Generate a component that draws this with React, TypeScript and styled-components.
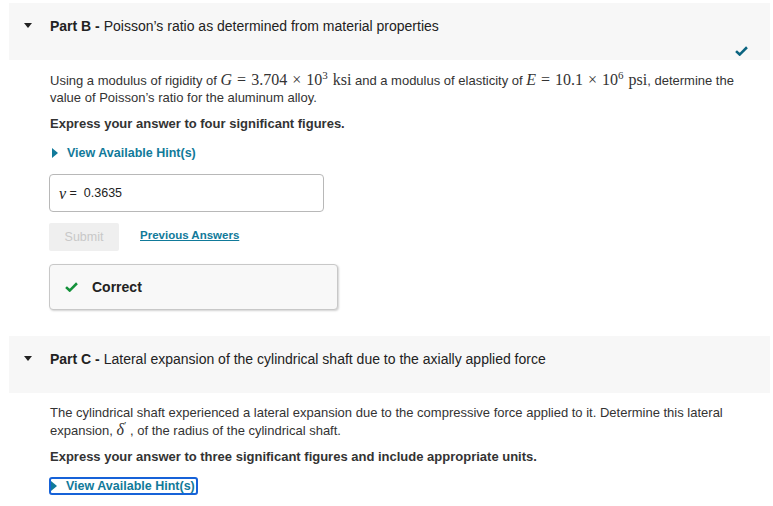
import styled, { createGlobalStyle } from 'styled-components';

const GlobalStyle = createGlobalStyle`
  body {
    margin: 0;
    background: #ffffff;
    font-family: "Liberation Sans", Arial, sans-serif;
    color: #333333;
  }
`;

const Page = styled.div`
  padding: 3px 3px 0 9px;
`;

const PartHeader = styled.div`
  position: relative;
  height: 57px;
  background: #f7f7f7;
  display: flex;
  align-items: flex-start;
  padding: 15px 0 0 15px;
  box-sizing: border-box;
  font-size: 14px;
  color: #222222;
`;

const Caret = styled.span`
  width: 0;
  height: 0;
  border-left: 4.5px solid transparent;
  border-right: 4.5px solid transparent;
  border-top: 5px solid #222222;
  margin: 5px 18px 0 0;
`;

const PartLabel = styled.span`
  font-weight: bold;
`;

const DoneMark = styled.div`
  position: absolute;
  right: 22px;
  bottom: 1px;
`;

const Body = styled.div<{ $bottom: number }>`
  padding: 11px 24px 0 41px;
  margin-bottom: ${(p) => p.$bottom}px;
  font-size: 13px;
  line-height: 17px;
  color: #333333;
`;

const Para = styled.p`
  margin: 0;
`;

const Instruction = styled.p`
  margin: 9px 0 0;
  font-weight: bold;
  color: #333333;
`;

const HintLink = styled.div<{ $focused?: boolean }>`
  display: inline-flex;
  align-items: center;
  margin-top: 12px;
  margin-left: ${(p) => (p.$focused ? '-1px' : '0')};
  padding: 0 1px 0 0;
  font-weight: bold;
  color: #117a9a;
  font-size: 12.5px;
  line-height: 14px;
  border: ${(p) => (p.$focused ? '2px solid #1662d8' : '2px solid transparent')};
  border-radius: 3px;
  box-sizing: border-box;
`;

const HintCaret = styled.span`
  width: 0;
  height: 0;
  border-top: 5px solid transparent;
  border-bottom: 5px solid transparent;
  border-left: 6px solid #117a9a;
  margin-right: 9px;
`;

const AnswerBox = styled.div`
  width: 275px;
  height: 38px;
  margin-top: 12px;
  margin-left: -1px;
  border: 1px solid #b8b8b8;
  border-radius: 4px;
  box-sizing: border-box;
  display: flex;
  align-items: center;
  padding-left: 9px;
  font-size: 12.5px;
  color: #222222;
`;

const MathVar = styled.span`
  font-family: "Liberation Serif", "Times New Roman", serif;
  font-style: italic;
  font-size: 16px;
`;

const MathUp = styled.span`
  font-family: "Liberation Serif", "Times New Roman", serif;
  font-size: 16px;
`;

const MathOp = styled(MathUp)`
  display: inline-block;
  margin: 0 5px;
`;

const MathUnit = styled(MathUp)`
  display: inline-block;
  margin-left: 5px;
`;

const Sup = styled.sup`
  font-family: "Liberation Serif", "Times New Roman", serif;
  font-size: 11px;
  line-height: 0;
  vertical-align: 6px;
`;

const ActionRow = styled.div`
  display: flex;
  align-items: center;
  gap: 21px;
  margin-top: 11px;
  margin-left: -1px;
`;

const SubmitButton = styled.button`
  width: 70px;
  height: 28px;
  border: none;
  border-radius: 2px;
  background: #efefef;
  color: #c8c8c8;
  font-family: "Liberation Sans", Arial, sans-serif;
  font-size: 12.5px;
  padding: 0;
`;

const PrevLink = styled.span`
  color: #117a9a;
  font-weight: bold;
  font-size: 11.5px;
  text-decoration: underline;
  margin-top: -3px;
`;

const FeedbackBox = styled.div`
  width: 289px;
  height: 46px;
  margin-top: 13px;
  margin-left: -1px;
  border: 1px solid #c8c8c8;
  border-radius: 4px;
  background: #f8f8f8;
  box-shadow: 1px 1px 2px rgba(0, 0, 0, 0.18);
  box-sizing: border-box;
  display: flex;
  align-items: center;
  padding-left: 15px;
  gap: 14px;
  font-weight: bold;
  font-size: 14px;
  color: #222222;
`;

const Check = ({ color, w, h }: { color: string; w: number; h: number }) => (
  <svg width={w} height={h} viewBox="0 0 14 11">
    <path d="M1 5.6 L5 9.4 L13 1.4" fill="none" stroke={color} strokeWidth="2.8" strokeLinejoin="miter" />
  </svg>
);

const App = () => (
  <Page>
    <GlobalStyle />
    <PartHeader>
      <Caret />
      <span>
        <PartLabel>Part B - </PartLabel>Poisson’s ratio as determined from material properties
      </span>
      <DoneMark>
        <Check color="#0b6480" w={13} h={10} />
      </DoneMark>
    </PartHeader>
    <Body $bottom={26}>
      <Para>
        Using a modulus of rigidity of <MathVar>G</MathVar>
        <MathOp>=</MathOp>
        <MathUp>3.704</MathUp>
        <MathOp>×</MathOp>
        <MathUp>10</MathUp>
        <Sup>3</Sup>
        <MathUnit>ksi</MathUnit> and a modulus of elasticity of <MathVar>E</MathVar>
        <MathOp>=</MathOp>
        <MathUp>10.1</MathUp>
        <MathOp>×</MathOp>
        <MathUp>10</MathUp>
        <Sup>6</Sup>
        <MathUnit>psi</MathUnit>, determine the value of Poisson’s ratio for the aluminum alloy.
      </Para>
      <Instruction>Express your answer to four significant figures.</Instruction>
      <HintLink>
        <HintCaret />
        View Available Hint(s)
      </HintLink>
      <AnswerBox>
        <MathVar>ν</MathVar>&nbsp;= &nbsp;0.3635
      </AnswerBox>
      <ActionRow>
        <SubmitButton>Submit</SubmitButton>
        <PrevLink>Previous Answers</PrevLink>
      </ActionRow>
      <FeedbackBox>
        <Check color="#14913a" w={13} h={10} />
        Correct
      </FeedbackBox>
    </Body>
    <PartHeader>
      <Caret />
      <span>
        <PartLabel>Part C - </PartLabel>Lateral expansion of the cylindrical shaft due to the axially applied force
      </span>
    </PartHeader>
    <Body $bottom={0}>
      <Para>
        The cylindrical shaft experienced a lateral expansion due to the compressive force applied to it. Determine this lateral
        expansion, <MathVar>δ</MathVar>
        <Sup>′</Sup> , of the radius of the cylindrical shaft.
      </Para>
      <Instruction>Express your answer to three significant figures and include appropriate units.</Instruction>
      <HintLink $focused>
        <HintCaret />
        View Available Hint(s)
      </HintLink>
    </Body>
  </Page>
);

export default App;
